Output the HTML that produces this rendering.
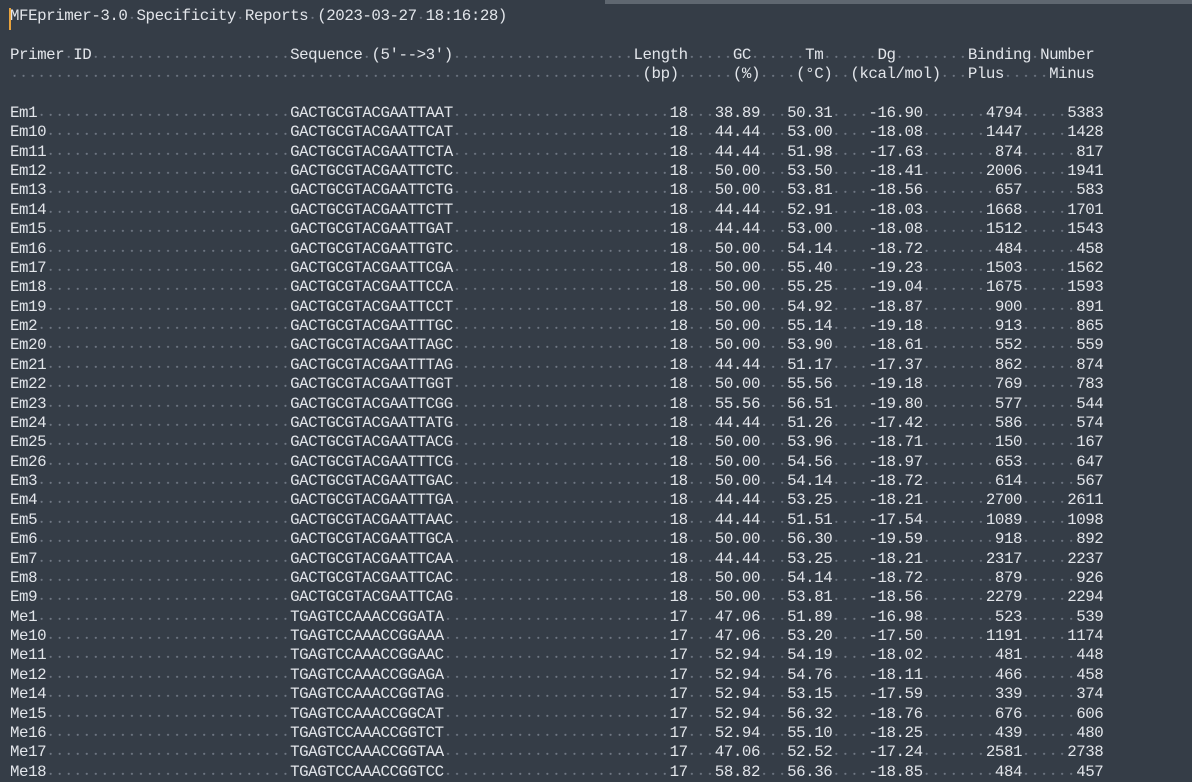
<!DOCTYPE html>
<html><head><meta charset="utf-8"><style>
html,body{margin:0;padding:0;background:#353d47;width:1192px;height:781px;overflow:hidden}
#top{position:absolute;left:605px;top:0;width:587px;height:4px;background:#5f6770}
#cur{position:absolute;left:9px;top:8px;width:2px;height:22px;background:#e8a33d}
#w{--c:9.036px;position:absolute;left:10px;top:7px;font-family:"Liberation Mono",monospace;font-size:15.8px;letter-spacing:-0.444px;color:#e2e5ea}
.l{position:relative;height:19.38px;line-height:19.38px;background:radial-gradient(circle at 50% 57%,#6f7783 0.8px,transparent 1.3px) 0 0/9.036px 19.38px repeat-x}
.b{background:none}
.l i{position:absolute;top:0;font-style:normal;background:#353d47;white-space:pre}
.r{width:calc(121 * var(--c))}
.r i:nth-child(1){left:0}
.r i:nth-child(2){left:calc(31 * var(--c))}
.r i:nth-child(3){left:calc(73 * var(--c))}
.r i:nth-child(4){left:calc(78 * var(--c))}
.r i:nth-child(5){left:calc(86 * var(--c))}
.r i:nth-child(6){left:calc(95 * var(--c))}
.r i:nth-child(7){right:calc(9 * var(--c))}
.r i:nth-child(8){right:0}
</style></head><body>
<div id="top"></div>
<div id="w">
<div class="l" style="width:calc(55 * var(--c))"><i style="left:0">MFEprimer-3.0</i><i style="left:calc(14 * var(--c))">Specificity</i><i style="left:calc(26 * var(--c))">Reports</i><i style="left:calc(34 * var(--c))">(2023-03-27</i><i style="left:calc(46 * var(--c))">18:16:28)</i></div>
<div class="l b"></div>
<div class="l" style="width:calc(120 * var(--c))"><i style="left:0">Primer</i><i style="left:calc(7 * var(--c))">ID</i><i style="left:calc(31 * var(--c))">Sequence</i><i style="left:calc(40 * var(--c))">(5'-->3')</i><i style="left:calc(69 * var(--c))">Length</i><i style="left:calc(80 * var(--c))">GC</i><i style="left:calc(88 * var(--c))">Tm</i><i style="left:calc(96 * var(--c))">Dg</i><i style="left:calc(106 * var(--c))">Binding</i><i style="left:calc(114 * var(--c))">Number</i></div>
<div class="l" style="width:calc(120 * var(--c))"><i style="left:calc(70 * var(--c))">(bp)</i><i style="left:calc(80 * var(--c))">(%)</i><i style="left:calc(87 * var(--c))">(°C)</i><i style="left:calc(93 * var(--c))">(kcal/mol)</i><i style="left:calc(106 * var(--c))">Plus</i><i style="left:calc(115 * var(--c))">Minus</i></div>
<div class="l b"></div>
<div class="l r"><i>Em1</i><i>GACTGCGTACGAATTAAT</i><i>18</i><i>38.89</i><i>50.31</i><i>-16.90</i><i>4794</i><i>5383</i></div>
<div class="l r"><i>Em10</i><i>GACTGCGTACGAATTCAT</i><i>18</i><i>44.44</i><i>53.00</i><i>-18.08</i><i>1447</i><i>1428</i></div>
<div class="l r"><i>Em11</i><i>GACTGCGTACGAATTCTA</i><i>18</i><i>44.44</i><i>51.98</i><i>-17.63</i><i>874</i><i>817</i></div>
<div class="l r"><i>Em12</i><i>GACTGCGTACGAATTCTC</i><i>18</i><i>50.00</i><i>53.50</i><i>-18.41</i><i>2006</i><i>1941</i></div>
<div class="l r"><i>Em13</i><i>GACTGCGTACGAATTCTG</i><i>18</i><i>50.00</i><i>53.81</i><i>-18.56</i><i>657</i><i>583</i></div>
<div class="l r"><i>Em14</i><i>GACTGCGTACGAATTCTT</i><i>18</i><i>44.44</i><i>52.91</i><i>-18.03</i><i>1668</i><i>1701</i></div>
<div class="l r"><i>Em15</i><i>GACTGCGTACGAATTGAT</i><i>18</i><i>44.44</i><i>53.00</i><i>-18.08</i><i>1512</i><i>1543</i></div>
<div class="l r"><i>Em16</i><i>GACTGCGTACGAATTGTC</i><i>18</i><i>50.00</i><i>54.14</i><i>-18.72</i><i>484</i><i>458</i></div>
<div class="l r"><i>Em17</i><i>GACTGCGTACGAATTCGA</i><i>18</i><i>50.00</i><i>55.40</i><i>-19.23</i><i>1503</i><i>1562</i></div>
<div class="l r"><i>Em18</i><i>GACTGCGTACGAATTCCA</i><i>18</i><i>50.00</i><i>55.25</i><i>-19.04</i><i>1675</i><i>1593</i></div>
<div class="l r"><i>Em19</i><i>GACTGCGTACGAATTCCT</i><i>18</i><i>50.00</i><i>54.92</i><i>-18.87</i><i>900</i><i>891</i></div>
<div class="l r"><i>Em2</i><i>GACTGCGTACGAATTTGC</i><i>18</i><i>50.00</i><i>55.14</i><i>-19.18</i><i>913</i><i>865</i></div>
<div class="l r"><i>Em20</i><i>GACTGCGTACGAATTAGC</i><i>18</i><i>50.00</i><i>53.90</i><i>-18.61</i><i>552</i><i>559</i></div>
<div class="l r"><i>Em21</i><i>GACTGCGTACGAATTTAG</i><i>18</i><i>44.44</i><i>51.17</i><i>-17.37</i><i>862</i><i>874</i></div>
<div class="l r"><i>Em22</i><i>GACTGCGTACGAATTGGT</i><i>18</i><i>50.00</i><i>55.56</i><i>-19.18</i><i>769</i><i>783</i></div>
<div class="l r"><i>Em23</i><i>GACTGCGTACGAATTCGG</i><i>18</i><i>55.56</i><i>56.51</i><i>-19.80</i><i>577</i><i>544</i></div>
<div class="l r"><i>Em24</i><i>GACTGCGTACGAATTATG</i><i>18</i><i>44.44</i><i>51.26</i><i>-17.42</i><i>586</i><i>574</i></div>
<div class="l r"><i>Em25</i><i>GACTGCGTACGAATTACG</i><i>18</i><i>50.00</i><i>53.96</i><i>-18.71</i><i>150</i><i>167</i></div>
<div class="l r"><i>Em26</i><i>GACTGCGTACGAATTTCG</i><i>18</i><i>50.00</i><i>54.56</i><i>-18.97</i><i>653</i><i>647</i></div>
<div class="l r"><i>Em3</i><i>GACTGCGTACGAATTGAC</i><i>18</i><i>50.00</i><i>54.14</i><i>-18.72</i><i>614</i><i>567</i></div>
<div class="l r"><i>Em4</i><i>GACTGCGTACGAATTTGA</i><i>18</i><i>44.44</i><i>53.25</i><i>-18.21</i><i>2700</i><i>2611</i></div>
<div class="l r"><i>Em5</i><i>GACTGCGTACGAATTAAC</i><i>18</i><i>44.44</i><i>51.51</i><i>-17.54</i><i>1089</i><i>1098</i></div>
<div class="l r"><i>Em6</i><i>GACTGCGTACGAATTGCA</i><i>18</i><i>50.00</i><i>56.30</i><i>-19.59</i><i>918</i><i>892</i></div>
<div class="l r"><i>Em7</i><i>GACTGCGTACGAATTCAA</i><i>18</i><i>44.44</i><i>53.25</i><i>-18.21</i><i>2317</i><i>2237</i></div>
<div class="l r"><i>Em8</i><i>GACTGCGTACGAATTCAC</i><i>18</i><i>50.00</i><i>54.14</i><i>-18.72</i><i>879</i><i>926</i></div>
<div class="l r"><i>Em9</i><i>GACTGCGTACGAATTCAG</i><i>18</i><i>50.00</i><i>53.81</i><i>-18.56</i><i>2279</i><i>2294</i></div>
<div class="l r"><i>Me1</i><i>TGAGTCCAAACCGGATA</i><i>17</i><i>47.06</i><i>51.89</i><i>-16.98</i><i>523</i><i>539</i></div>
<div class="l r"><i>Me10</i><i>TGAGTCCAAACCGGAAA</i><i>17</i><i>47.06</i><i>53.20</i><i>-17.50</i><i>1191</i><i>1174</i></div>
<div class="l r"><i>Me11</i><i>TGAGTCCAAACCGGAAC</i><i>17</i><i>52.94</i><i>54.19</i><i>-18.02</i><i>481</i><i>448</i></div>
<div class="l r"><i>Me12</i><i>TGAGTCCAAACCGGAGA</i><i>17</i><i>52.94</i><i>54.76</i><i>-18.11</i><i>466</i><i>458</i></div>
<div class="l r"><i>Me14</i><i>TGAGTCCAAACCGGTAG</i><i>17</i><i>52.94</i><i>53.15</i><i>-17.59</i><i>339</i><i>374</i></div>
<div class="l r"><i>Me15</i><i>TGAGTCCAAACCGGCAT</i><i>17</i><i>52.94</i><i>56.32</i><i>-18.76</i><i>676</i><i>606</i></div>
<div class="l r"><i>Me16</i><i>TGAGTCCAAACCGGTCT</i><i>17</i><i>52.94</i><i>55.10</i><i>-18.25</i><i>439</i><i>480</i></div>
<div class="l r"><i>Me17</i><i>TGAGTCCAAACCGGTAA</i><i>17</i><i>47.06</i><i>52.52</i><i>-17.24</i><i>2581</i><i>2738</i></div>
<div class="l r"><i>Me18</i><i>TGAGTCCAAACCGGTCC</i><i>17</i><i>58.82</i><i>56.36</i><i>-18.85</i><i>484</i><i>457</i></div>
</div>
<div id="cur"></div>
</body></html>
